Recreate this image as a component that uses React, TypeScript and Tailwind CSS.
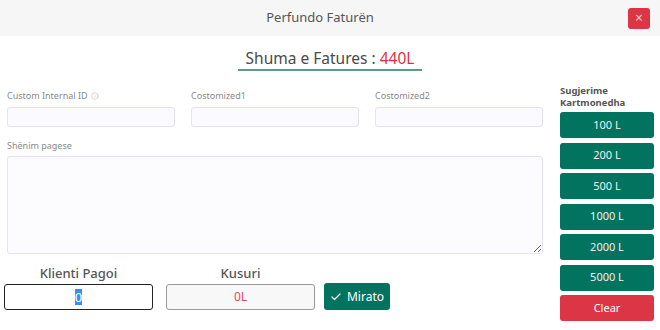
import { Check, Info } from 'lucide-react';

const amounts = ['100 L', '200 L', '500 L', '1000 L', '2000 L', '5000 L'];

function Field({ label, info }: { label: string; info?: boolean }) {
  return (
    <div className="flex flex-col">
      <div className="flex items-center gap-[3px] h-[12px] text-[9px] leading-[12px] text-[#8a8a8a]">
        {label}
        {info && <Info size={8} strokeWidth={1.5} className="text-[#b5b5b5]" />}
      </div>
      <div className="mt-[5px] h-[20px] rounded-[3px] border border-[#e4e1fa] bg-[#fbfbff]" />
    </div>
  );
}

export default function App() {
  return (
    <div
      className="w-[660px] h-[330px] bg-white overflow-hidden"
      style={{ fontFamily: '"Noto Sans", "Open Sans", sans-serif' }}
    >
      {/* Header */}
      <div className="h-[36px] bg-[#f6f6f6] flex items-center pr-[10px]">
        <div className="flex-1 pl-[12px] text-center text-[13px] text-[#555]">Perfundo Faturën</div>
        <button className="w-[22px] h-[21px] rounded-[3px] bg-[#dc3545] text-[#f8c9ce] text-[14px] leading-none flex items-center justify-center">
          ×
        </button>
      </div>

      {/* Total */}
      <div className="flex justify-center pt-[11px]">
        <div className="px-[8px] border-b-2 border-[#5a9b8c] text-[15.5px] leading-[22px] text-[#4a4a4a]">
          Shuma e Fatures : <span className="text-[#e0303f]">440L</span>
        </div>
      </div>

      <div className="flex">
        {/* Left side */}
        <div className="ml-[4px] w-[539px] pt-[19px]">
          <div className="pl-[3px]">
            <div className="grid grid-cols-3 gap-x-[16px]">
              <Field label="Custom Internal ID" info />
              <Field label="Costomized1" />
              <Field label="Costomized2" />
            </div>
            <div className="mt-[13px] h-[12px] text-[9px] leading-[12px] text-[#8a8a8a]">Shënim pagese</div>
            <textarea className="mt-[4px] block w-full h-[98px] rounded-[3px] border border-[#e4e1fa] bg-[#fcfcff] outline-none" />
          </div>

          <div className="mt-[11px] flex items-end">
            <div className="w-[149px] flex flex-col items-center">
              <div className="text-[13px] leading-[16px] font-medium text-[#555]">Klienti Pagoi</div>
              <div className="mt-[3px] w-full h-[26px] rounded-[3px] border-[1.5px] border-[#222] bg-white flex items-center justify-center">
                <span className="bg-[#3390ff] text-white text-[13px] leading-[16px]">0</span>
              </div>
            </div>
            <div className="ml-[13px] w-[149px] flex flex-col items-center">
              <div className="text-[13px] leading-[16px] font-medium text-[#555]">Kusuri</div>
              <div className="mt-[3px] w-full h-[26px] rounded-[3px] border border-[#9a9a9a] bg-[#f8f8f8] flex items-center justify-center text-[12px] text-[#e0505a]">
                0L
              </div>
            </div>
            <button className="ml-[9px] w-[66px] h-[27px] rounded-[3px] bg-[#02735f] text-white text-[12px] flex items-center justify-center gap-[5px]">
              <Check size={12} strokeWidth={2.5} />
              Mirato
            </button>
          </div>
        </div>

        {/* Right side */}
        <div className="ml-[17px] w-[94px] pt-[14px]">
          <div className="text-[9.5px] leading-[12px] font-bold text-[#555]">
            Sugjerime
            <br />
            Kartmonedha
          </div>
          <div className="mt-[3px] flex flex-col gap-[4.5px]">
            {amounts.map((a) => (
              <button
                key={a}
                className="h-[26px] rounded-[3px] bg-[#02735f] text-[#f0f0f0] text-[11px]"
              >
                {a}
              </button>
            ))}
            <button className="h-[26px] rounded-[3px] bg-[#dc3545] text-white text-[11px]">Clear</button>
          </div>
        </div>
      </div>
    </div>
  );
}
